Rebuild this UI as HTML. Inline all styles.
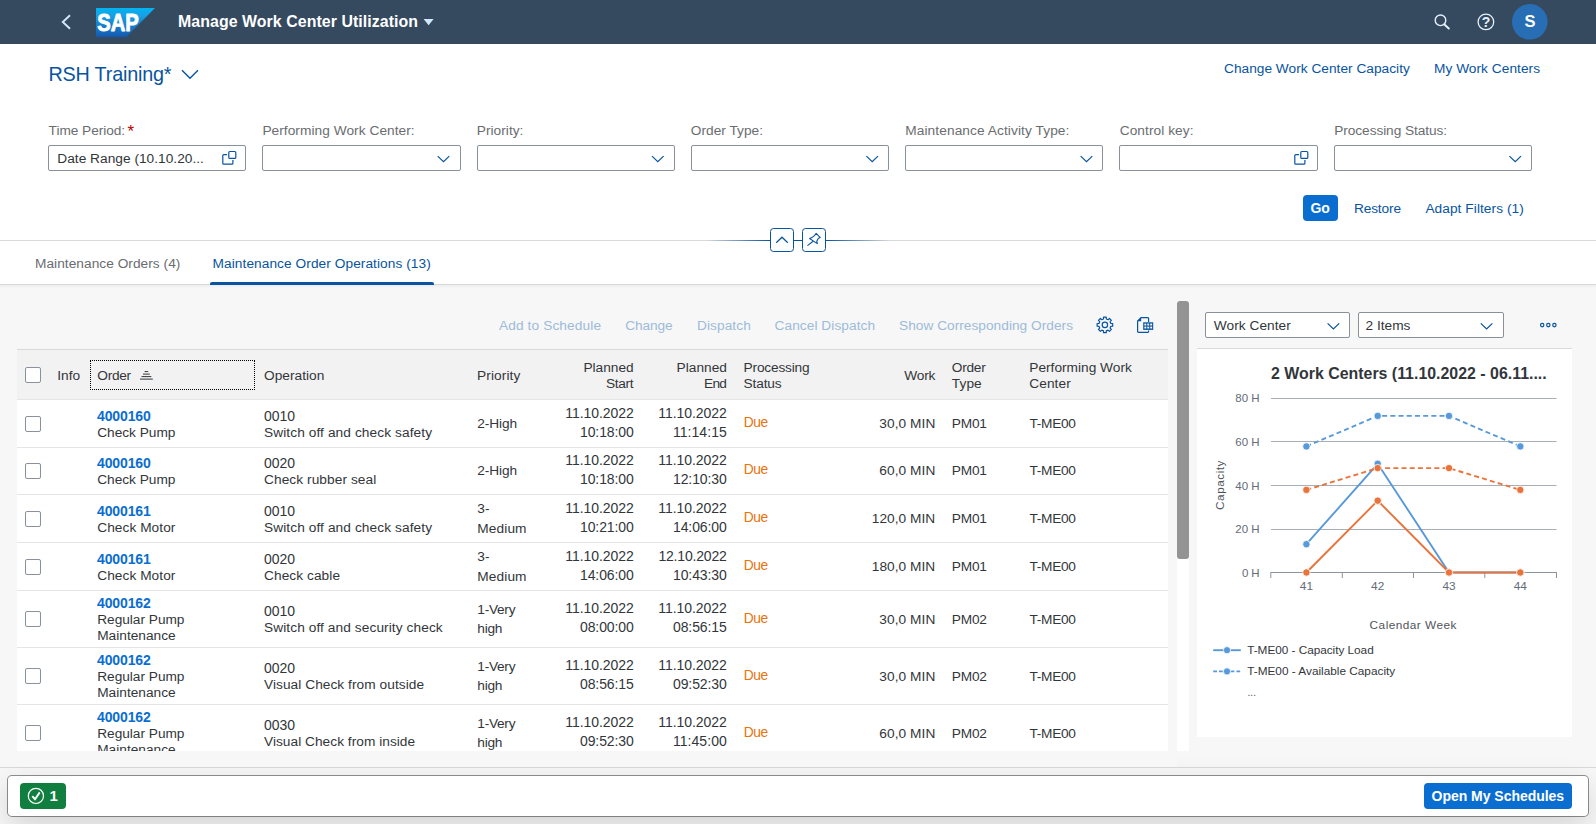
<!DOCTYPE html>
<html lang="en"><head><meta charset="utf-8"><title>Manage Work Center Utilization</title>
<style>html,body{margin:0;padding:0}
body{width:1596px;height:824px;position:relative;overflow:hidden;background:#f7f7f7;font-family:"Liberation Sans", sans-serif;}
#p div{position:absolute}
#p span{position:absolute;white-space:pre;line-height:1}
#p svg{position:absolute;left:0;top:0}</style></head>
<body><div id="p">
<div style="left:0px;top:0px;width:1596px;height:44px;background:#354a5f"></div>
<div style="left:0px;top:44px;width:1596px;height:196px;background:#fff"></div>
<div style="left:48px;top:145px;width:198px;height:26px;box-sizing:border-box;border:1px solid #89919a;border-radius:2px;background:#fff"></div>
<div style="left:262px;top:145px;width:199px;height:26px;box-sizing:border-box;border:1px solid #89919a;border-radius:2px;background:#fff"></div>
<div style="left:477px;top:145px;width:198px;height:26px;box-sizing:border-box;border:1px solid #89919a;border-radius:2px;background:#fff"></div>
<div style="left:691px;top:145px;width:198px;height:26px;box-sizing:border-box;border:1px solid #89919a;border-radius:2px;background:#fff"></div>
<div style="left:905px;top:145px;width:198px;height:26px;box-sizing:border-box;border:1px solid #89919a;border-radius:2px;background:#fff"></div>
<div style="left:1119px;top:145px;width:199px;height:26px;box-sizing:border-box;border:1px solid #89919a;border-radius:2px;background:#fff"></div>
<div style="left:1334px;top:145px;width:198px;height:26px;box-sizing:border-box;border:1px solid #89919a;border-radius:2px;background:#fff"></div>
<div style="left:1303px;top:195px;width:35px;height:26px;background:#0a6ed1;border-radius:4px"></div>
<div style="left:0px;top:240px;width:1596px;height:1px;background:#d9d9d9"></div>
<div style="left:0px;top:241px;width:1596px;height:43px;background:#fff"></div>
<div style="left:0px;top:284px;width:1596px;height:1px;background:#d9d9d9"></div>
<div style="left:210px;top:282px;width:224px;height:3px;background:#0854a0;border-radius:2px 2px 0 0"></div>
<div style="left:0px;top:285px;width:1596px;height:482px;background:#f7f7f7"></div>
<div style="left:0px;top:285px;width:1596px;height:3px;background:linear-gradient(#ececec,#f7f7f7)"></div>
<div style="left:0px;top:767px;width:1596px;height:1px;background:#d9d9d9"></div>
<div style="left:0px;top:768px;width:1596px;height:56px;background:#f7f7f7"></div>
<div style="left:17px;top:349px;width:1151px;height:1px;background:#d9d9d9"></div>
<div style="left:17px;top:350px;width:1151px;height:49px;background:#f2f2f2"></div>
<div style="left:17px;top:399px;width:1151px;height:352px;background:#fff"></div>
<div style="left:17px;top:399px;width:1151px;height:1px;background:#e5e5e5"></div>
<div style="left:17px;top:447px;width:1151px;height:1px;background:#e5e5e5"></div>
<div style="left:17px;top:494px;width:1151px;height:1px;background:#e5e5e5"></div>
<div style="left:17px;top:542px;width:1151px;height:1px;background:#e5e5e5"></div>
<div style="left:17px;top:590px;width:1151px;height:1px;background:#e5e5e5"></div>
<div style="left:17px;top:647px;width:1151px;height:1px;background:#e5e5e5"></div>
<div style="left:17px;top:704px;width:1151px;height:1px;background:#e5e5e5"></div>
<div style="left:25px;top:367px;width:16px;height:16px;box-sizing:border-box;border:1px solid #89919a;border-radius:2px;background:#fff"></div>
<div style="left:90px;top:360px;width:165px;height:30px;box-sizing:border-box;border:1px dotted #000"></div>
<div style="left:25px;top:416px;width:16px;height:16px;box-sizing:border-box;border:1px solid #89919a;border-radius:2px;background:#fff"></div>
<div style="left:25px;top:463px;width:16px;height:16px;box-sizing:border-box;border:1px solid #89919a;border-radius:2px;background:#fff"></div>
<div style="left:25px;top:511px;width:16px;height:16px;box-sizing:border-box;border:1px solid #89919a;border-radius:2px;background:#fff"></div>
<div style="left:25px;top:559px;width:16px;height:16px;box-sizing:border-box;border:1px solid #89919a;border-radius:2px;background:#fff"></div>
<div style="left:25px;top:611px;width:16px;height:16px;box-sizing:border-box;border:1px solid #89919a;border-radius:2px;background:#fff"></div>
<div style="left:25px;top:668px;width:16px;height:16px;box-sizing:border-box;border:1px solid #89919a;border-radius:2px;background:#fff"></div>
<div style="left:25px;top:725px;width:16px;height:16px;box-sizing:border-box;border:1px solid #89919a;border-radius:2px;background:#fff"></div>
<div style="left:1177px;top:301px;width:12px;height:450px;background:#fff"></div>
<div style="left:1177px;top:301px;width:12px;height:258px;background:#949494;border-radius:3px"></div>
<div style="left:1205px;top:312px;width:145px;height:26px;box-sizing:border-box;border:1px solid #89919a;border-radius:2px;background:#fff"></div>
<div style="left:1358px;top:312px;width:146px;height:26px;box-sizing:border-box;border:1px solid #89919a;border-radius:2px;background:#fff"></div>
<div style="left:1197px;top:348px;width:375px;height:1px;background:#d9d9d9"></div>
<div style="left:1197px;top:349px;width:375px;height:388px;background:#fff"></div>
<div style="left:8px;top:776px;width:1580px;height:40px;background:#fff;border-radius:4px;box-shadow:0 0 0 1px rgba(0,0,0,.42),0 10px 30px 0 rgba(0,0,0,.15)"></div>
<div style="left:20px;top:783px;width:46px;height:26px;background:#107e3e;border-radius:4px"></div>
<div style="left:1424px;top:783px;width:148px;height:26px;background:#0a6ed1;border-radius:4px"></div>
<svg width="1596" height="824" viewBox="0 0 1596 824"><polyline points="70,15.3 62.8,22 70,28.7" fill="none" stroke="#d1e8ff" stroke-width="1.9" stroke-linejoin="miter"/>
<defs><linearGradient id="sapg" x1="0" y1="0" x2="0" y2="1"><stop offset="0" stop-color="#00b4f0"/><stop offset="0.25" stop-color="#18a2e6"/><stop offset="1" stop-color="#1458b0"/></linearGradient></defs>
<polygon points="96,8 155,8 126.3,37 96,37" fill="url(#sapg)"/>
<text x="97.2" y="31.2" font-family='"Liberation Sans", sans-serif' font-weight="bold" font-size="24" fill="#fff" stroke="#fff" stroke-width="0.9" stroke-linejoin="round" textLength="41.6" lengthAdjust="spacingAndGlyphs">SAP</text>
<polygon points="423.6,19 433.6,19 428.6,25.2" fill="#d1e8ff"/>
<circle cx="1440.5" cy="20.3" r="5.3" fill="none" stroke="#e6f1ff" stroke-width="1.4"/><line x1="1444.4" y1="24.4" x2="1448.8" y2="28.5" stroke="#e6f1ff" stroke-width="2" stroke-linecap="round"/>
<circle cx="1485.9" cy="21.9" r="7.8" fill="none" stroke="#e6f1ff" stroke-width="1.3"/>
<circle cx="1529.8" cy="21.8" r="17.8" fill="#286eb4"/>
<polyline points="182,70.2 190,78.3 198,70.2" fill="none" stroke="#0854a0" stroke-width="1.4"/>
<rect x="228.8" y="151.5" width="7" height="6.9" rx="1" fill="none" stroke="#0854a0" stroke-width="1.2"/><path d="M227,154.6 H223.8 a1,1 0 0 0 -1,1 V163.2 a1,1 0 0 0 1,1 H231.9 a1,1 0 0 0 1,-1 V160" fill="none" stroke="#0854a0" stroke-width="1.2"/>
<polyline points="437.7,156.1 443.5,161.7 449.3,156.1" fill="none" stroke="#0854a0" stroke-width="1.2"/>
<polyline points="652.0,156.1 657.8,161.7 663.6,156.1" fill="none" stroke="#0854a0" stroke-width="1.2"/>
<polyline points="866.4,156.1 872.2,161.7 878.0,156.1" fill="none" stroke="#0854a0" stroke-width="1.2"/>
<polyline points="1080.7,156.1 1086.5,161.7 1092.3,156.1" fill="none" stroke="#0854a0" stroke-width="1.2"/>
<rect x="1300.8" y="151.5" width="7" height="6.9" rx="1" fill="none" stroke="#0854a0" stroke-width="1.2"/><path d="M1299,154.6 H1295.8 a1,1 0 0 0 -1,1 V163.2 a1,1 0 0 0 1,1 H1303.9 a1,1 0 0 0 1,-1 V160" fill="none" stroke="#0854a0" stroke-width="1.2"/>
<polyline points="1509.4,156.1 1515.2,161.7 1521.0,156.1" fill="none" stroke="#0854a0" stroke-width="1.2"/>
<defs><linearGradient id="lg1" x1="0" x2="1"><stop offset="0" stop-color="#0854a0" stop-opacity="0"/><stop offset="1" stop-color="#0854a0"/></linearGradient><linearGradient id="lg2" x1="0" x2="1"><stop offset="0" stop-color="#0854a0"/><stop offset="1" stop-color="#0854a0" stop-opacity="0"/></linearGradient></defs>
<rect x="706" y="240" width="64" height="1" fill="url(#lg1)"/><rect x="826" y="240" width="64" height="1" fill="url(#lg2)"/>
<rect x="794" y="240" width="8" height="1" fill="#0854a0"/>
<rect x="770.5" y="228.5" width="23" height="23" rx="3" fill="#fff" stroke="#0854a0" stroke-width="1"/>
<rect x="802.5" y="228.5" width="23" height="23" rx="3" fill="#fff" stroke="#0854a0" stroke-width="1"/>
<polyline points="776.2,242.8 782,237.2 787.8,242.8" fill="none" stroke="#0854a0" stroke-width="1.2"/>
<g fill="none" stroke="#0854a0" stroke-width="1.1" stroke-linejoin="round"><path d="M816.2,233.4 L820.3,237.6 L818.2,238.4 L816.8,241.3 L817.3,243.6 L809.6,238.5 L812,237.6 L814.6,235.4 Z"/><line x1="813.2" y1="241.2" x2="807.4" y2="245.6"/></g>
<path d="M1112.68,323.54 L1112.68,326.26 L1110.83,326.32 L1110.10,328.09 L1111.36,329.44 L1109.44,331.36 L1108.09,330.10 L1106.32,330.83 L1106.26,332.68 L1103.54,332.68 L1103.48,330.83 L1101.71,330.10 L1100.36,331.36 L1098.44,329.44 L1099.70,328.09 L1098.97,326.32 L1097.12,326.26 L1097.12,323.54 L1098.97,323.48 L1099.70,321.71 L1098.44,320.36 L1100.36,318.44 L1101.71,319.70 L1103.48,318.97 L1103.54,317.12 L1106.26,317.12 L1106.32,318.97 L1108.09,319.70 L1109.44,318.44 L1111.36,320.36 L1110.10,321.71 L1110.83,323.48 Z" fill="none" stroke="#0854a0" stroke-width="1.2" stroke-linejoin="round"/><circle cx="1104.9" cy="324.9" r="2.7" fill="none" stroke="#0854a0" stroke-width="1.2"/>
<g fill="none" stroke="#0854a0" stroke-width="1.2"><path d="M1148.6,322 V318.4 a0.8,0.8 0 0 0 -0.8,-0.8 H1141 L1137.6,321 V331.5 a0.8,0.8 0 0 0 0.8,0.8 H1147.8 a0.8,0.8 0 0 0 0.8,-0.8 V330.6"/></g><polygon points="1137.4,321.2 1141.2,321.2 1141.2,317.4" fill="#0854a0"/><rect x="1143.2" y="322.3" width="10" height="7.6" fill="#0854a0"/><g fill="#f7f7f7"><rect x="1144.4" y="323.6" width="1.9" height="1.9"/><rect x="1147.3" y="323.6" width="1.9" height="1.9"/><rect x="1150.2" y="323.6" width="1.9" height="1.9"/><rect x="1144.4" y="326.6" width="1.9" height="1.9"/><rect x="1147.3" y="326.6" width="1.9" height="1.9"/><rect x="1150.2" y="326.6" width="1.9" height="1.9"/></g>
<g stroke="#32363a" stroke-width="1"><line x1="144.6" y1="371.6" x2="148.2" y2="371.6"/><line x1="143" y1="374.1" x2="149.8" y2="374.1"/><line x1="141.5" y1="376.6" x2="151.3" y2="376.6"/><line x1="140" y1="379.1" x2="152.8" y2="379.1"/></g>
<polyline points="1327.6,323.4 1333.4,329 1339.2,323.4" fill="none" stroke="#0854a0" stroke-width="1.2"/>
<polyline points="1480.8,323.4 1486.6,329 1492.4,323.4" fill="none" stroke="#0854a0" stroke-width="1.2"/>
<circle cx="1542.2" cy="325.1" r="1.7" fill="none" stroke="#0854a0" stroke-width="1.15"/>
<circle cx="1548.3" cy="325.1" r="1.7" fill="none" stroke="#0854a0" stroke-width="1.15"/>
<circle cx="1554.4" cy="325.1" r="1.7" fill="none" stroke="#0854a0" stroke-width="1.15"/>
<line x1="1271" y1="529.5" x2="1556.5" y2="529.5" stroke="#a9afb8" stroke-width="1"/>
<line x1="1271" y1="485.5" x2="1556.5" y2="485.5" stroke="#a9afb8" stroke-width="1"/>
<line x1="1271" y1="441.5" x2="1556.5" y2="441.5" stroke="#a9afb8" stroke-width="1"/>
<line x1="1271" y1="398.5" x2="1556.5" y2="398.5" stroke="#a9afb8" stroke-width="1"/>
<line x1="1270.5" y1="572.5" x2="1557" y2="572.5" stroke="#8d939b" stroke-width="1"/>
<line x1="1270.8" y1="572.5" x2="1270.8" y2="578" stroke="#8d939b" stroke-width="1"/>
<line x1="1342.3" y1="572.5" x2="1342.3" y2="578" stroke="#8d939b" stroke-width="1"/>
<line x1="1413.5" y1="572.5" x2="1413.5" y2="578" stroke="#8d939b" stroke-width="1"/>
<line x1="1484.8" y1="572.5" x2="1484.8" y2="578" stroke="#8d939b" stroke-width="1"/>
<line x1="1556.5" y1="572.5" x2="1556.5" y2="578" stroke="#8d939b" stroke-width="1"/>
<polyline points="1306.4,544.2 1377.7,463.8 1449.0,572.5 1520.3,572.5" fill="none" stroke="#5899da" stroke-width="1.9"/>
<circle cx="1306.4" cy="544.2" r="3.7" fill="#5899da" stroke="#fff" stroke-width="0.8"/>
<circle cx="1377.7" cy="463.8" r="3.7" fill="#5899da" stroke="#fff" stroke-width="0.8"/>
<circle cx="1449.0" cy="572.5" r="3.7" fill="#5899da" stroke="#fff" stroke-width="0.8"/>
<circle cx="1520.3" cy="572.5" r="3.7" fill="#5899da" stroke="#fff" stroke-width="0.8"/>
<polyline points="1306.4,446.4 1377.7,415.9 1449.0,415.9 1520.3,446.4" fill="none" stroke="#5899da" stroke-width="1.9" stroke-dasharray="5,3.2"/>
<circle cx="1306.4" cy="446.4" r="3.7" fill="#5899da" stroke="#fff" stroke-width="0.8"/>
<circle cx="1377.7" cy="415.9" r="3.7" fill="#5899da" stroke="#fff" stroke-width="0.8"/>
<circle cx="1449.0" cy="415.9" r="3.7" fill="#5899da" stroke="#fff" stroke-width="0.8"/>
<circle cx="1520.3" cy="446.4" r="3.7" fill="#5899da" stroke="#fff" stroke-width="0.8"/>
<polyline points="1306.4,572.5 1377.7,500.7 1449.0,572.5 1520.3,572.5" fill="none" stroke="#e8743b" stroke-width="1.9"/>
<circle cx="1306.4" cy="572.5" r="3.7" fill="#e8743b" stroke="#fff" stroke-width="0.8"/>
<circle cx="1377.7" cy="500.7" r="3.7" fill="#e8743b" stroke="#fff" stroke-width="0.8"/>
<circle cx="1449.0" cy="572.5" r="3.7" fill="#e8743b" stroke="#fff" stroke-width="0.8"/>
<circle cx="1520.3" cy="572.5" r="3.7" fill="#e8743b" stroke="#fff" stroke-width="0.8"/>
<polyline points="1306.4,489.9 1377.7,468.1 1449.0,468.1 1520.3,489.9" fill="none" stroke="#e8743b" stroke-width="1.9" stroke-dasharray="5,3.2"/>
<circle cx="1306.4" cy="489.9" r="3.7" fill="#e8743b" stroke="#fff" stroke-width="0.8"/>
<circle cx="1377.7" cy="468.1" r="3.7" fill="#e8743b" stroke="#fff" stroke-width="0.8"/>
<circle cx="1449.0" cy="468.1" r="3.7" fill="#e8743b" stroke="#fff" stroke-width="0.8"/>
<circle cx="1520.3" cy="489.9" r="3.7" fill="#e8743b" stroke="#fff" stroke-width="0.8"/>
<line x1="1213.2" y1="650.2" x2="1240.8" y2="650.2" stroke="#5899da" stroke-width="1.9"/><circle cx="1227" cy="650.2" r="3.6" fill="#5899da" stroke="#fff" stroke-width="0.8"/>
<line x1="1213.2" y1="671.4" x2="1240.8" y2="671.4" stroke="#5899da" stroke-width="1.9" stroke-dasharray="3.8,2"/><circle cx="1227" cy="671.4" r="3.6" fill="#5899da" stroke="#fff" stroke-width="0.8"/>
<circle cx="35.9" cy="795.9" r="7.6" fill="none" stroke="#fff" stroke-width="1.2"/><polyline points="32.3,796.2 35,799.2 39.7,792.4" fill="none" stroke="#fff" stroke-width="1.9"/></svg>
<span style="font-size:15.9px;color:#fff;font-weight:bold;letter-spacing:0.065px;left:178.0px;top:14.02px;">Manage Work Center Utilization</span>
<span style="font-size:14px;color:#e6f1ff;font-weight:bold;left:1481.7px;top:15.01px;">?</span>
<span style="font-size:16.5px;color:#fff;font-weight:bold;left:1524.6px;top:13.01px;">S</span>
<span style="font-size:19.8px;color:#0854a0;letter-spacing:-0.195px;left:48.5px;top:65.01px;">RSH Training*</span>
<span style="font-size:13.7px;color:#0854a0;letter-spacing:0.016px;left:1224.0px;top:62.00px;">Change Work Center Capacity</span>
<span style="font-size:13.7px;color:#0854a0;letter-spacing:0.038px;left:1434.0px;top:62.00px;">My Work Centers</span>
<span style="font-size:13.7px;color:#6a6d70;letter-spacing:-0.045px;left:48.6px;top:124.00px;">Time Period:</span>
<span style="font-size:13.7px;color:#6a6d70;letter-spacing:0.053px;left:262.4px;top:124.00px;">Performing Work Center:</span>
<span style="font-size:13.7px;color:#6a6d70;letter-spacing:0.026px;left:476.8px;top:124.00px;">Priority:</span>
<span style="font-size:13.7px;color:#6a6d70;letter-spacing:0.017px;left:690.8px;top:124.00px;">Order Type:</span>
<span style="font-size:13.7px;color:#6a6d70;letter-spacing:0.091px;left:905.3px;top:124.00px;">Maintenance Activity Type:</span>
<span style="font-size:13.7px;color:#6a6d70;letter-spacing:0.070px;left:1119.7px;top:124.00px;">Control key:</span>
<span style="font-size:13.7px;color:#6a6d70;letter-spacing:-0.084px;left:1334.3px;top:124.00px;">Processing Status:</span>
<span style="font-size:17px;color:#bb0000;left:127.4px;top:123.00px;">*</span>
<span style="font-size:13.7px;color:#32363a;letter-spacing:0.022px;left:57.3px;top:152.01px;">Date Range (10.10.20...</span>
<span style="font-size:14px;color:#fff;font-weight:bold;letter-spacing:-0.253px;left:1310.6px;top:201.01px;">Go</span>
<span style="font-size:13.7px;color:#0854a0;letter-spacing:-0.156px;left:1354.0px;top:202.01px;">Restore</span>
<span style="font-size:13.7px;color:#0854a0;letter-spacing:0.064px;left:1425.4px;top:202.01px;">Adapt Filters (1)</span>
<span style="font-size:13.7px;color:#6a6d70;letter-spacing:0.041px;left:35.0px;top:257.00px;">Maintenance Orders (4)</span>
<span style="font-size:13.7px;color:#0854a0;letter-spacing:0.066px;left:212.6px;top:257.00px;">Maintenance Order Operations (13)</span>
<span style="font-size:13.7px;color:#9dbbd9;letter-spacing:0.110px;left:499.0px;top:319.00px;">Add to Schedule</span>
<span style="font-size:13.7px;color:#9dbbd9;letter-spacing:-0.111px;left:625.3px;top:319.00px;">Change</span>
<span style="font-size:13.7px;color:#9dbbd9;letter-spacing:0.076px;left:697.0px;top:319.00px;">Dispatch</span>
<span style="font-size:13.7px;color:#9dbbd9;letter-spacing:0.066px;left:774.5px;top:319.00px;">Cancel Dispatch</span>
<span style="font-size:13.7px;color:#9dbbd9;letter-spacing:0.022px;left:899.0px;top:319.00px;">Show Corresponding Orders</span>
<span style="font-size:13.7px;color:#32363a;letter-spacing:0.019px;left:57.3px;top:369.00px;">Info</span>
<span style="font-size:13.7px;color:#32363a;letter-spacing:-0.300px;left:97.3px;top:369.00px;">Order</span>
<span style="font-size:13.7px;color:#32363a;letter-spacing:0.034px;left:264.0px;top:369.00px;">Operation</span>
<span style="font-size:13.7px;color:#32363a;letter-spacing:0.101px;left:477.0px;top:369.00px;">Priority</span>
<span style="font-size:13.7px;color:#32363a;letter-spacing:0.011px;right:962.3px;top:361.00px;">Planned</span>
<span style="font-size:13.7px;color:#32363a;letter-spacing:-0.277px;right:962.6px;top:377.00px;">Start</span>
<span style="font-size:13.7px;color:#32363a;letter-spacing:0.011px;right:869.1px;top:361.00px;">Planned</span>
<span style="font-size:13.7px;color:#32363a;letter-spacing:-0.730px;right:869.8px;top:377.00px;">End</span>
<span style="font-size:13.7px;color:#32363a;letter-spacing:-0.191px;left:743.6px;top:361.00px;">Processing</span>
<span style="font-size:13.7px;color:#32363a;letter-spacing:-0.163px;left:743.6px;top:377.00px;">Status</span>
<span style="font-size:13.7px;color:#32363a;letter-spacing:-0.229px;right:660.9px;top:369.00px;">Work</span>
<span style="font-size:13.7px;color:#32363a;letter-spacing:-0.250px;left:951.8px;top:361.00px;">Order</span>
<span style="font-size:13.7px;color:#32363a;letter-spacing:0.075px;left:951.8px;top:377.00px;">Type</span>
<span style="font-size:13.7px;color:#32363a;letter-spacing:0.004px;left:1029.3px;top:361.00px;">Performing Work</span>
<span style="font-size:13.7px;color:#32363a;letter-spacing:0.062px;left:1029.3px;top:377.00px;">Center</span>
<span style="font-size:14px;color:#0a6ed1;font-weight:bold;letter-spacing:-0.119px;left:97.0px;top:409.01px;">4000160</span>
<span style="font-size:13.7px;color:#32363a;letter-spacing:-0.018px;left:97.2px;top:426.00px;">Check Pump</span>
<span style="font-size:14px;color:#32363a;letter-spacing:-0.052px;left:264.0px;top:409.01px;">0010</span>
<span style="font-size:13.7px;color:#32363a;letter-spacing:0.092px;left:264.0px;top:426.00px;">Switch off and check safety</span>
<span style="font-size:13.7px;color:#32363a;letter-spacing:-0.066px;left:477.2px;top:417.00px;">2-High</span>
<span style="font-size:14px;color:#32363a;letter-spacing:-0.070px;right:962.3px;top:406.01px;">11.10.2022</span>
<span style="font-size:14px;color:#32363a;letter-spacing:-0.100px;right:962.3px;top:425.01px;">10:18:00</span>
<span style="font-size:14px;color:#32363a;letter-spacing:-0.070px;right:869.3px;top:406.01px;">11.10.2022</span>
<span style="font-size:14px;color:#32363a;letter-spacing:0.047px;right:869.2px;top:425.01px;">11:14:15</span>
<span style="font-size:13.8px;color:#e9730c;letter-spacing:-0.356px;left:743.7px;top:416.00px;">Due</span>
<span style="font-size:13.7px;color:#32363a;letter-spacing:0.065px;right:660.6px;top:417.00px;">30,0 MIN</span>
<span style="font-size:13.7px;color:#32363a;letter-spacing:-0.189px;left:951.8px;top:417.00px;">PM01</span>
<span style="font-size:13.7px;color:#32363a;letter-spacing:-0.344px;left:1029.6px;top:417.00px;">T-ME00</span>
<span style="font-size:14px;color:#0a6ed1;font-weight:bold;letter-spacing:-0.119px;left:97.0px;top:456.01px;">4000160</span>
<span style="font-size:13.7px;color:#32363a;letter-spacing:-0.018px;left:97.2px;top:473.00px;">Check Pump</span>
<span style="font-size:14px;color:#32363a;letter-spacing:-0.052px;left:264.0px;top:456.01px;">0020</span>
<span style="font-size:13.7px;color:#32363a;letter-spacing:0.070px;left:264.0px;top:473.00px;">Check rubber seal</span>
<span style="font-size:13.7px;color:#32363a;letter-spacing:-0.066px;left:477.2px;top:464.00px;">2-High</span>
<span style="font-size:14px;color:#32363a;letter-spacing:-0.070px;right:962.3px;top:453.01px;">11.10.2022</span>
<span style="font-size:14px;color:#32363a;letter-spacing:-0.100px;right:962.3px;top:472.01px;">10:18:00</span>
<span style="font-size:14px;color:#32363a;letter-spacing:-0.070px;right:869.3px;top:453.01px;">11.10.2022</span>
<span style="font-size:14px;color:#32363a;letter-spacing:-0.100px;right:869.3px;top:472.01px;">12:10:30</span>
<span style="font-size:13.8px;color:#e9730c;letter-spacing:-0.356px;left:743.7px;top:463.00px;">Due</span>
<span style="font-size:13.7px;color:#32363a;letter-spacing:0.065px;right:660.6px;top:464.00px;">60,0 MIN</span>
<span style="font-size:13.7px;color:#32363a;letter-spacing:-0.189px;left:951.8px;top:464.00px;">PM01</span>
<span style="font-size:13.7px;color:#32363a;letter-spacing:-0.344px;left:1029.6px;top:464.00px;">T-ME00</span>
<span style="font-size:14px;color:#0a6ed1;font-weight:bold;letter-spacing:-0.119px;left:97.0px;top:504.01px;">4000161</span>
<span style="font-size:13.7px;color:#32363a;letter-spacing:0.061px;left:97.2px;top:521.00px;">Check Motor</span>
<span style="font-size:14px;color:#32363a;letter-spacing:-0.052px;left:264.0px;top:504.01px;">0010</span>
<span style="font-size:13.7px;color:#32363a;letter-spacing:0.092px;left:264.0px;top:521.00px;">Switch off and check safety</span>
<span style="font-size:13.7px;color:#32363a;letter-spacing:0.128px;left:477.3px;top:502.00px;">3-</span>
<span style="font-size:13.7px;color:#32363a;letter-spacing:0.103px;left:477.3px;top:522.00px;">Medium</span>
<span style="font-size:14px;color:#32363a;letter-spacing:-0.070px;right:962.3px;top:501.01px;">11.10.2022</span>
<span style="font-size:14px;color:#32363a;letter-spacing:-0.100px;right:962.3px;top:520.01px;">10:21:00</span>
<span style="font-size:14px;color:#32363a;letter-spacing:-0.070px;right:869.3px;top:501.01px;">11.10.2022</span>
<span style="font-size:14px;color:#32363a;letter-spacing:-0.100px;right:869.3px;top:520.01px;">14:06:00</span>
<span style="font-size:13.8px;color:#e9730c;letter-spacing:-0.356px;left:743.7px;top:511.00px;">Due</span>
<span style="font-size:13.7px;color:#32363a;letter-spacing:0.043px;right:660.7px;top:512.00px;">120,0 MIN</span>
<span style="font-size:13.7px;color:#32363a;letter-spacing:-0.189px;left:951.8px;top:512.00px;">PM01</span>
<span style="font-size:13.7px;color:#32363a;letter-spacing:-0.344px;left:1029.6px;top:512.00px;">T-ME00</span>
<span style="font-size:14px;color:#0a6ed1;font-weight:bold;letter-spacing:-0.119px;left:97.0px;top:552.00px;">4000161</span>
<span style="font-size:13.7px;color:#32363a;letter-spacing:0.061px;left:97.2px;top:569.01px;">Check Motor</span>
<span style="font-size:14px;color:#32363a;letter-spacing:-0.052px;left:264.0px;top:552.00px;">0020</span>
<span style="font-size:13.7px;color:#32363a;letter-spacing:0.067px;left:264.0px;top:569.01px;">Check cable</span>
<span style="font-size:13.7px;color:#32363a;letter-spacing:0.128px;left:477.3px;top:550.01px;">3-</span>
<span style="font-size:13.7px;color:#32363a;letter-spacing:0.103px;left:477.3px;top:570.01px;">Medium</span>
<span style="font-size:14px;color:#32363a;letter-spacing:-0.070px;right:962.3px;top:549.00px;">11.10.2022</span>
<span style="font-size:14px;color:#32363a;letter-spacing:-0.100px;right:962.3px;top:568.00px;">14:06:00</span>
<span style="font-size:14px;color:#32363a;letter-spacing:-0.186px;right:869.4px;top:549.00px;">12.10.2022</span>
<span style="font-size:14px;color:#32363a;letter-spacing:-0.100px;right:869.3px;top:568.00px;">10:43:30</span>
<span style="font-size:13.8px;color:#e9730c;letter-spacing:-0.356px;left:743.7px;top:559.00px;">Due</span>
<span style="font-size:13.7px;color:#32363a;letter-spacing:0.043px;right:660.7px;top:560.01px;">180,0 MIN</span>
<span style="font-size:13.7px;color:#32363a;letter-spacing:-0.189px;left:951.8px;top:560.01px;">PM01</span>
<span style="font-size:13.7px;color:#32363a;letter-spacing:-0.344px;left:1029.6px;top:560.01px;">T-ME00</span>
<span style="font-size:14px;color:#0a6ed1;font-weight:bold;letter-spacing:-0.119px;left:97.0px;top:596.01px;">4000162</span>
<span style="font-size:13.7px;color:#32363a;letter-spacing:-0.018px;left:97.2px;top:613.00px;">Regular Pump</span>
<span style="font-size:13.7px;color:#32363a;letter-spacing:0.011px;left:97.2px;top:629.00px;">Maintenance</span>
<span style="font-size:14px;color:#32363a;letter-spacing:-0.052px;left:264.0px;top:604.01px;">0010</span>
<span style="font-size:13.7px;color:#32363a;letter-spacing:0.087px;left:264.0px;top:621.00px;">Switch off and security check</span>
<span style="font-size:13.7px;color:#32363a;letter-spacing:-0.272px;left:477.3px;top:603.01px;">1-Very</span>
<span style="font-size:13.7px;color:#32363a;letter-spacing:-0.230px;left:477.3px;top:622.00px;">high</span>
<span style="font-size:14px;color:#32363a;letter-spacing:-0.070px;right:962.3px;top:601.01px;">11.10.2022</span>
<span style="font-size:14px;color:#32363a;letter-spacing:-0.100px;right:962.3px;top:620.01px;">08:00:00</span>
<span style="font-size:14px;color:#32363a;letter-spacing:-0.070px;right:869.3px;top:601.01px;">11.10.2022</span>
<span style="font-size:14px;color:#32363a;letter-spacing:-0.100px;right:869.3px;top:620.01px;">08:56:15</span>
<span style="font-size:13.8px;color:#e9730c;letter-spacing:-0.356px;left:743.7px;top:612.00px;">Due</span>
<span style="font-size:13.7px;color:#32363a;letter-spacing:0.065px;right:660.6px;top:613.00px;">30,0 MIN</span>
<span style="font-size:13.7px;color:#32363a;letter-spacing:-0.189px;left:951.8px;top:613.00px;">PM02</span>
<span style="font-size:13.7px;color:#32363a;letter-spacing:-0.344px;left:1029.6px;top:613.00px;">T-ME00</span>
<span style="font-size:14px;color:#0a6ed1;font-weight:bold;letter-spacing:-0.119px;left:97.0px;top:653.00px;">4000162</span>
<span style="font-size:13.7px;color:#32363a;letter-spacing:-0.018px;left:97.2px;top:670.01px;">Regular Pump</span>
<span style="font-size:13.7px;color:#32363a;letter-spacing:0.011px;left:97.2px;top:686.01px;">Maintenance</span>
<span style="font-size:14px;color:#32363a;letter-spacing:-0.052px;left:264.0px;top:661.00px;">0020</span>
<span style="font-size:13.7px;color:#32363a;letter-spacing:0.052px;left:264.0px;top:678.01px;">Visual Check from outside</span>
<span style="font-size:13.7px;color:#32363a;letter-spacing:-0.272px;left:477.3px;top:660.00px;">1-Very</span>
<span style="font-size:13.7px;color:#32363a;letter-spacing:-0.230px;left:477.3px;top:679.00px;">high</span>
<span style="font-size:14px;color:#32363a;letter-spacing:-0.070px;right:962.3px;top:658.00px;">11.10.2022</span>
<span style="font-size:14px;color:#32363a;letter-spacing:-0.100px;right:962.3px;top:677.00px;">08:56:15</span>
<span style="font-size:14px;color:#32363a;letter-spacing:-0.070px;right:869.3px;top:658.00px;">11.10.2022</span>
<span style="font-size:14px;color:#32363a;letter-spacing:-0.100px;right:869.3px;top:677.00px;">09:52:30</span>
<span style="font-size:13.8px;color:#e9730c;letter-spacing:-0.356px;left:743.7px;top:669.01px;">Due</span>
<span style="font-size:13.7px;color:#32363a;letter-spacing:0.065px;right:660.6px;top:670.00px;">30,0 MIN</span>
<span style="font-size:13.7px;color:#32363a;letter-spacing:-0.189px;left:951.8px;top:670.00px;">PM02</span>
<span style="font-size:13.7px;color:#32363a;letter-spacing:-0.344px;left:1029.6px;top:670.00px;">T-ME00</span>
<span style="font-size:14px;color:#0a6ed1;font-weight:bold;letter-spacing:-0.119px;left:97.0px;top:710.00px;">4000162</span>
<span style="font-size:13.7px;color:#32363a;letter-spacing:-0.018px;left:97.2px;top:727.00px;">Regular Pump</span>
<span style="font-size:13.7px;color:#32363a;letter-spacing:0.011px;left:97.2px;top:743.00px;">Maintenance</span>
<span style="font-size:14px;color:#32363a;letter-spacing:-0.052px;left:264.0px;top:718.00px;">0030</span>
<span style="font-size:13.7px;color:#32363a;letter-spacing:0.031px;left:264.0px;top:735.00px;">Visual Check from inside</span>
<span style="font-size:13.7px;color:#32363a;letter-spacing:-0.272px;left:477.3px;top:717.01px;">1-Very</span>
<span style="font-size:13.7px;color:#32363a;letter-spacing:-0.230px;left:477.3px;top:736.00px;">high</span>
<span style="font-size:14px;color:#32363a;letter-spacing:-0.070px;right:962.3px;top:715.00px;">11.10.2022</span>
<span style="font-size:14px;color:#32363a;letter-spacing:-0.100px;right:962.3px;top:734.00px;">09:52:30</span>
<span style="font-size:14px;color:#32363a;letter-spacing:-0.070px;right:869.3px;top:715.00px;">11.10.2022</span>
<span style="font-size:14px;color:#32363a;letter-spacing:0.047px;right:869.2px;top:734.00px;">11:45:00</span>
<span style="font-size:13.8px;color:#e9730c;letter-spacing:-0.356px;left:743.7px;top:726.01px;">Due</span>
<span style="font-size:13.7px;color:#32363a;letter-spacing:0.065px;right:660.6px;top:727.00px;">60,0 MIN</span>
<span style="font-size:13.7px;color:#32363a;letter-spacing:-0.189px;left:951.8px;top:727.00px;">PM02</span>
<span style="font-size:13.7px;color:#32363a;letter-spacing:-0.344px;left:1029.6px;top:727.00px;">T-ME00</span>
<span style="font-size:13.7px;color:#32363a;letter-spacing:0.042px;left:1213.8px;top:319.00px;">Work Center</span>
<span style="font-size:13.7px;color:#32363a;letter-spacing:-0.015px;left:1365.6px;top:319.00px;">2 Items</span>
<span style="font-size:15.9px;color:#32363a;font-weight:bold;letter-spacing:0.010px;left:1271.0px;top:366.00px;">2 Work Centers (11.10.2022 - 06.11....</span>
<span style="font-size:11.5px;color:#636c77;letter-spacing:-0.032px;right:336.5px;top:524.01px;">20 H</span>
<span style="font-size:11.5px;color:#636c77;letter-spacing:-0.032px;right:336.5px;top:481.01px;">40 H</span>
<span style="font-size:11.5px;color:#636c77;letter-spacing:-0.032px;right:336.5px;top:437.01px;">60 H</span>
<span style="font-size:11.5px;color:#636c77;letter-spacing:-0.032px;right:336.5px;top:393.01px;">80 H</span>
<span style="font-size:11.5px;color:#636c77;letter-spacing:-0.153px;right:336.7px;top:568.01px;">0 H</span>
<span style="font-size:11.8px;color:#636c77;letter-spacing:0.075px;left:1299.8px;top:581.00px;">41</span>
<span style="font-size:11.8px;color:#636c77;letter-spacing:0.075px;left:1371.1px;top:581.00px;">42</span>
<span style="font-size:11.8px;color:#636c77;letter-spacing:0.075px;left:1442.4px;top:581.00px;">43</span>
<span style="font-size:11.8px;color:#636c77;letter-spacing:0.075px;left:1513.7px;top:581.00px;">44</span>
<span style="font-size:11.8px;color:#50555b;letter-spacing:0.500px;left:1220.6px;top:484.8px;transform:translate(-50%,-50%) rotate(-90deg);">Capacity</span>
<span style="font-size:11.8px;color:#50555b;letter-spacing:0.476px;left:1369.6px;top:620.00px;">Calendar Week</span>
<span style="font-size:11.8px;color:#32363a;letter-spacing:-0.033px;left:1247.2px;top:645.01px;">T-ME00 - Capacity Load</span>
<span style="font-size:11.8px;color:#32363a;letter-spacing:0.001px;left:1247.2px;top:666.00px;">T-ME00 - Available Capacity</span>
<span style="font-size:11.8px;color:#6a6d70;letter-spacing:-0.422px;left:1247.2px;top:687.00px;">...</span>
<span style="font-size:15px;color:#fff;font-weight:bold;left:49.6px;top:788.00px;">1</span>
<span style="font-size:14px;color:#fff;font-weight:bold;letter-spacing:-0.034px;left:1431.6px;top:789.01px;">Open My Schedules</span>
<div style="left:0;top:751px;width:1177px;height:16px;background:#f7f7f7"></div>
</div></body></html>
